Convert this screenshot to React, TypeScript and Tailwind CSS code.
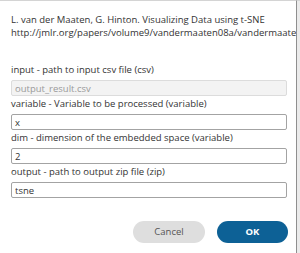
import React from 'react';

const fields = [
  { label: 'input - path to input csv file (csv)', value: 'output_result.csv', disabled: true },
  { label: 'variable - Variable to be processed (variable)', value: 'x', disabled: false },
  { label: 'dim - dimension of the embedded space (variable)', value: '2', disabled: false },
  { label: 'output - path to output zip file (zip)', value: 'tsne', disabled: false },
];

export default function App() {
  return (
    <div className="flex h-[253px] w-[300px] overflow-hidden bg-white font-['Open_Sans',sans-serif] text-[9.5px] text-[#333]">
      {/* Dialog */}
      <div className="flex w-[297px] shrink-0 flex-col border-r border-t border-r-[#8f8f8f] border-t-[#d4d4d4] pl-[11px] pr-[10px] pt-[12px]">
        <div className="whitespace-nowrap leading-[13px]">
          L. van der Maaten, G. Hinton. Visualizing Data using t-SNE
        </div>
        <div className="-mr-[10px] overflow-hidden whitespace-nowrap leading-[13px]">
          http://jmlr.org/papers/volume9/vandermaaten08a/vandermaaten08a.pdf
        </div>

        <div className="mt-[24px] flex flex-col">
          {fields.map((f) => (
            <div key={f.label} className="mb-[1px] flex flex-col">
              <label className="mb-[3px] h-[14px] whitespace-nowrap leading-[14px]">{f.label}</label>
              <input
                readOnly
                value={f.value}
                disabled={f.disabled}
                className={`h-[16px] w-[276px] rounded-[2px] border px-[3px] text-[9.5px] outline-none ${
                  f.disabled
                    ? 'border-[#dcdcdc] bg-[#f3f3f3] text-[#9a9a9a]'
                    : 'border-[#a3a3a3] bg-white text-[#333]'
                }`}
              />
            </div>
          ))}
        </div>

        <div className="mt-[22px] flex w-[277px] justify-end gap-[12px]">
          <button className="h-[22px] w-[72px] rounded-full bg-[#dedede] text-[9.5px] text-[#555]">
            Cancel
          </button>
          <button className="h-[22px] w-[71px] rounded-full bg-[#0d6196] text-[9.5px] font-bold text-white">
            OK
          </button>
        </div>
      </div>
      <div className="h-full w-[3px] border-t border-[#d4d4d4] bg-[#ebebeb]" />
    </div>
  );
}
